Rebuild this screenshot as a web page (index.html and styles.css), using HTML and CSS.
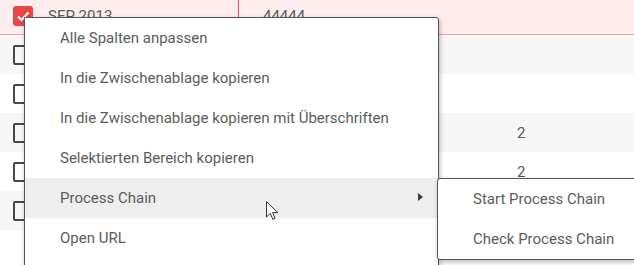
FILE: index.html
```html
<!DOCTYPE html>
<html>
<head>
<meta charset="utf-8">
<link rel="stylesheet" href="styles.css">
</head>
<body>
<div class="grid">
  <div class="row selected">
    <div class="c-check"><span class="cb checked"><svg viewBox="0 0 20 20" width="20" height="20"><path d="M5 10.5 L8.5 14 L15.5 6.5" fill="none" stroke="#fff" stroke-width="2.2"/></svg></span></div>
    <div class="c-date">SEP 2013</div>
    <div class="c-val">44444</div>
    <div class="c-num"></div>
  </div>
  <div class="row odd">
    <div class="c-check"><span class="cb"></span></div>
    <div class="c-date"></div><div class="c-val"></div><div class="c-num"></div>
  </div>
  <div class="row">
    <div class="c-check"><span class="cb"></span></div>
    <div class="c-date"></div><div class="c-val"></div><div class="c-num"></div>
  </div>
  <div class="row odd">
    <div class="c-check"><span class="cb"></span></div>
    <div class="c-date"></div><div class="c-val"></div><div class="c-num">2</div>
  </div>
  <div class="row">
    <div class="c-check"><span class="cb"></span></div>
    <div class="c-date"></div><div class="c-val"></div><div class="c-num">2</div>
  </div>
  <div class="row odd">
    <div class="c-check"><span class="cb"></span></div>
    <div class="c-date"></div><div class="c-val"></div><div class="c-num"></div>
  </div>
</div>

<div class="menu">
  <div class="item">Alle Spalten anpassen</div>
  <div class="item">In die Zwischenablage kopieren</div>
  <div class="item">In die Zwischenablage kopieren mit Überschriften</div>
  <div class="item">Selektierten Bereich kopieren</div>
  <div class="item active">Process Chain<span class="arrow"></span>
    <div class="submenu">
      <div class="item">Start Process Chain</div>
      <div class="item">Check Process Chain</div>
    </div>
  </div>
  <div class="item">Open URL</div>
</div>

<svg class="cursor" width="13" height="20" viewBox="0 0 13 20"><path d="M0.5 0.5 L0.5 16 L4.3 12.4 L6.8 18.3 L9 17.4 L6.6 11.6 L11.8 11.6 Z" fill="#fff" stroke="#333" stroke-width="1"/></svg>
</body>
</html>
```

FILE: styles.css
```css
html, body {
  margin: 0;
  padding: 0;
  background: #fff;
  overflow: hidden;
}
body {
  position: relative;
  width: 634px;
  height: 265px;
  font-family: Roboto, "Liberation Sans", sans-serif;
  color: #5a5a5a;
}
.grid {
  margin-top: -2px;
}
.row {
  display: flex;
  align-items: center;
  height: 39px;
  background: #fff;
  font-size: 15px;
}
.row.odd {
  background: #f7f7f7;
}
.row.selected {
  height: 36px;
  background: #fdeded;
  border-bottom: 1px solid #f3a3a3;
}
.c-check {
  width: 48px;
  display: flex;
  align-items: center;
  padding-left: 13px;
  box-sizing: border-box;
}
.cb {
  width: 20px;
  height: 20px;
  box-sizing: border-box;
  border: 2px solid #484848;
  border-radius: 2px;
  display: block;
}
.cb.checked {
  border: none;
  background: #e84545;
  border-radius: 3px;
}
.cb svg { display: block; }
.c-date {
  width: 191px;
  height: 100%;
  display: flex;
  align-items: center;
  box-sizing: border-box;
}
.selected .c-date {
  border-right: 1px solid #e25555;
}
.c-val {
  width: 265px;
  padding-left: 24px;
  box-sizing: border-box;
}
.c-num {
  padding-left: 13px;
}

.menu {
  position: absolute;
  left: 24px;
  top: 17px;
  width: 415px;
  box-sizing: border-box;
  background: #fff;
  border: 1px solid #555;
  border-radius: 0 3px 3px 3px;
  box-shadow: 1px 2px 5px rgba(0,0,0,0.28);
  padding-bottom: 10px;
  font-size: 15px;
}
.item {
  position: relative;
  height: 40px;
  display: flex;
  align-items: center;
  padding-left: 35px;
  color: #5c5c5c;
}
.item.active {
  background: #eeeeee;
}
.arrow {
  position: absolute;
  right: 15px;
  top: 15px;
  width: 0;
  height: 0;
  border-left: 5px solid #3c3c3c;
  border-top: 4.5px solid transparent;
  border-bottom: 4.5px solid transparent;
}
.submenu {
  position: absolute;
  left: 412px;
  top: 0;
  width: 210px;
  background: #fff;
  border: 1px solid #555;
  border-radius: 3px;
  box-shadow: 1px 2px 5px rgba(0,0,0,0.28);
}
.submenu .item {
  padding-left: 35px;
}
.cursor {
  position: absolute;
  left: 266px;
  top: 201px;
}
```
